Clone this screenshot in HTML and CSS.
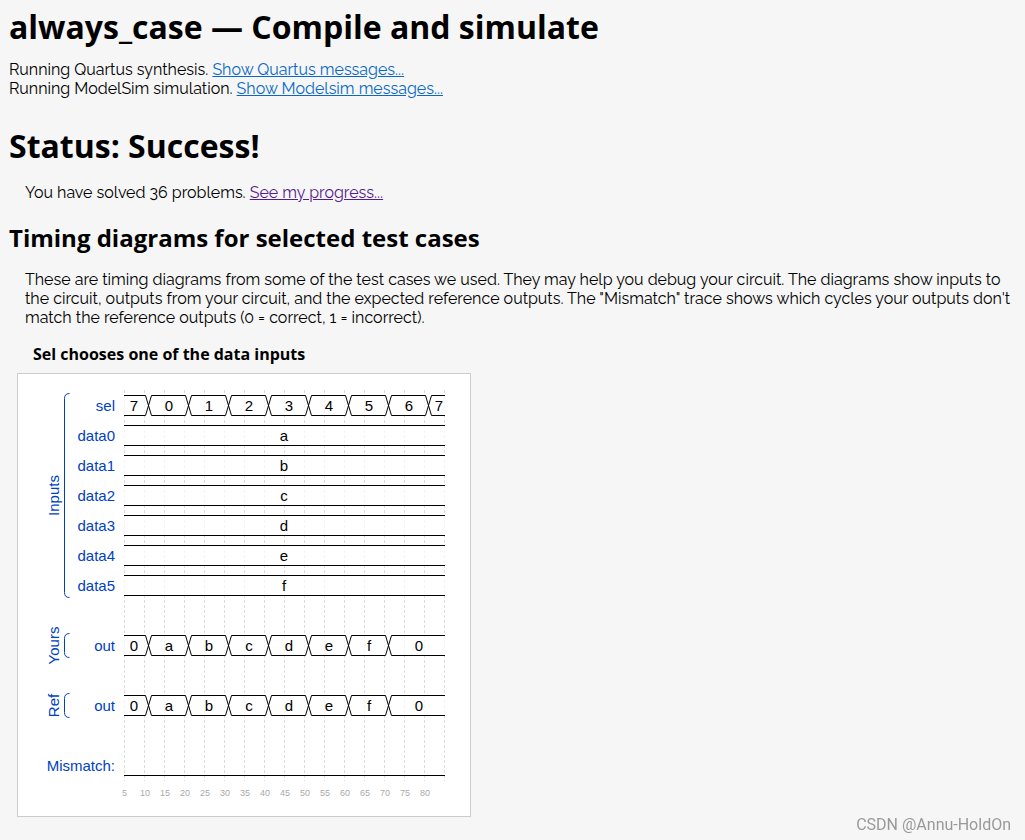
FILE: index.html
```
<!DOCTYPE html>
<html lang="en">
<head>
    <meta charset="UTF-8">
    <meta name="viewport" content="width=device-width, initial-scale=1.0">
    <title>always_case</title>
    <link rel="stylesheet" href="styles.css">
</head>

<body>
    <h1>always_case — Compile and simulate</h1>
    <div class="log">
        Running Quartus synthesis. <a href="#">Show Quartus messages...</a><br>
        Running ModelSim simulation. <a href="#">Show Modelsim messages...</a>
    </div>

    <h1 class="status">Status: Success!</h1>
    <p>You have solved 36 problems. <a class="visited" href="#">See my progress...</a></p>

    <h2>Timing diagrams for selected test cases</h2>
    <p>These are timing diagrams from some of the test cases we used. They may help you debug your circuit. The diagrams show inputs to the circuit, outputs from your circuit, and the expected reference outputs. The "Mismatch" trace shows which cycles your outputs don't match the reference outputs (0 = correct, 1 = incorrect).</p>

    <h4>Sel chooses one of the data inputs</h4>
    <div class="diagram">
        <svg id="wave" width="452" height="442" viewBox="0 0 452 442"></svg>
    </div>

    <div class="watermark">CSDN @Annu-HoldOn</div>
    <script src="script.js"></script>
</body>

</html>
```
FILE: styles.css
```
body {
    margin: 0 9px;
    background-color: #f6f6f6;
    color: #000;
    font-family: Raleway, Lato, sans-serif;
    font-size: 16px;
    line-height: 19px;
}

h1,
h2,
h4 {
    font-family: "Open Sans", sans-serif;
    font-weight: bold;
}

h1 {
    margin: 5px 0 11px;
    font-size: 32px;
    line-height: 44px;
}

h1.status {
    margin: 26px 0 15px;
}

h2 {
    margin: 19px 0 16px;
    font-size: 24px;
    line-height: 33px;
}

h4 {
    margin: 16px 24px 8px;
    font-size: 16px;
    line-height: 22px;
}

p {
    margin: 0 0 0 16px;
}

a {
    color: #0969c8;
}

a.visited {
    color: #551a8b;
}

.diagram {
    display: inline-block;
    margin: 0 8px;
    border: 1px solid #ccc;
    background-color: #fff;
}

.diagram svg {
    display: block;
    font-family: "Liberation Sans", Arial, sans-serif;
    font-size: 15px;
}

.grid {
    stroke: #ddd;
    stroke-dasharray: 3 2;
}

.bus {
    fill: #fff;
    fill-opacity: .7;
}

.line {
    fill: none;
    stroke: #000;
}

.value {
    text-anchor: middle;
}

.name {
    fill: #0041c4;
    text-anchor: end;
}

.group {
    fill: #0041c4;
    text-anchor: middle;
}

.brace {
    fill: none;
    stroke: #0041c4;
}

.tick {
    fill: #aaa;
    font-size: 9px;
    text-anchor: middle;
}

.watermark {
    position: fixed;
    right: 14px;
    bottom: 6px;
    color: #999;
    font-family: Roboto, Arial, sans-serif;
    font-size: 16px;
}
```
FILE: script.js
```
var svg = document.querySelector("#wave");

// origin of the waves, size of a row and of a time step
var left = 106;
var top0 = 21;
var rowHeight = 30;
var step = 20;
var total = 320;

// each value is [text, start step]
var signals = [
    { name: "sel", row: 0, values: [["7", 0], ["0", 1], ["1", 3], ["2", 5], ["3", 7], ["4", 9], ["5", 11], ["6", 13], ["7", 15]] },
    { name: "data0", row: 1, values: [["a", 0]] },
    { name: "data1", row: 2, values: [["b", 0]] },
    { name: "data2", row: 3, values: [["c", 0]] },
    { name: "data3", row: 4, values: [["d", 0]] },
    { name: "data4", row: 5, values: [["e", 0]] },
    { name: "data5", row: 6, values: [["f", 0]] },
    { name: "out", row: 8, values: [["0", 0], ["a", 1], ["b", 3], ["c", 5], ["d", 7], ["e", 9], ["f", 11], ["0", 13]] },
    { name: "out", row: 10, values: [["0", 0], ["a", 1], ["b", 3], ["c", 5], ["d", 7], ["e", 9], ["f", 11], ["0", 13]] },
    { name: "Mismatch:", row: 12, values: [] }
];

var groups = [
    { name: "Inputs", first: 0, last: 6 },
    { name: "Yours", first: 8, last: 8 },
    { name: "Ref", first: 10, last: 10 }
];

const add = (tag, attrs, text) => {
    var el = document.createElementNS("http://www.w3.org/2000/svg", tag);
    for (let key in attrs) {
        el.setAttribute(key, attrs[key]);
    }
    if (text) {
        el.textContent = text;
    }
    svg.appendChild(el);
}

// grid and time scale
for (let i = 0; i <= total / step; i++) {
    let x = left + 0.5 + i * step;
    add("path", { class: "grid", d: `M${x},16 V407` });
    if (i < total / step) {
        add("text", { class: "tick", x: x + (i ? 0.5 : 0), y: 422 }, String(5 * (i + 1)));
    }
}

signals.forEach((signal) => {
    let y = top0 + signal.row * rowHeight + 0.5;
    add("text", { class: "name", x: left - 9, y: y + 15 }, signal.name);

    if (!signal.values.length) {
        add("path", { class: "line", d: `M${left},${y + 20} h${total + 1}` });
        return;
    }

    add("rect", { class: "bus", x: left, y: y, width: total + 1, height: 20 });
    let upper = `M${left},${y}`;
    let lower = `M${left},${y + 20}`;
    signal.values.forEach((value, i) => {
        let start = value[1] * step;
        let end = i + 1 < signal.values.length ? signal.values[i + 1][1] * step : total;
        // the two rails cross at every change of value
        if (i > 0) {
            let x = left + start + 1.5;
            upper += ` H${x} l6,20 m0,-20`;
            lower += ` H${x} l6,-20 m0,20`;
        }
        let center = left + (start + end) / 2 + (start ? 5 : 0);
        add("text", { class: "value", x: center, y: y + 15 }, value[0]);
    });
    add("path", { class: "line", d: `${upper} H${left + total + 1} ${lower} H${left + total + 1}` });
});

groups.forEach((group) => {
    let y1 = top0 + group.first * rowHeight - 1.5;
    let y2 = top0 + group.last * rowHeight + 22.5;
    let middle = (y1 + y2) / 2;
    add("path", { class: "brace", d: `M51.5,${y1} q-5,0 -5,5 V${y2 - 5} q0,5 5,5` });
    add("text", { class: "group", transform: `translate(41,${middle}) rotate(-90)` }, group.name);
});
```
